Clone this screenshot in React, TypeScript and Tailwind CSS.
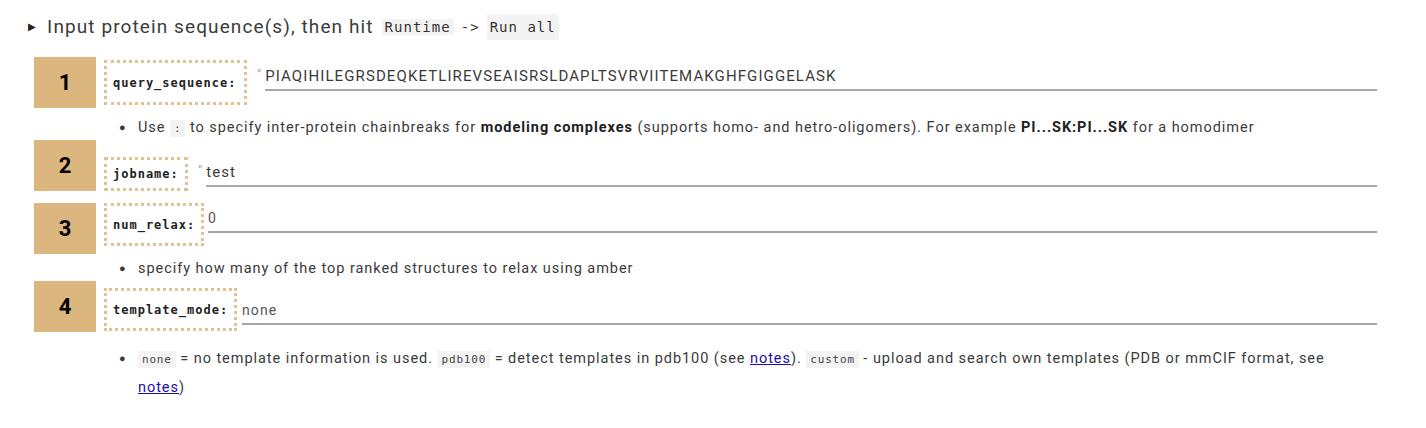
const ROWS = [
  {
    n: "1",
    label: "query_sequence:",
    value: "PIAQIHILEGRSDEQKETLIREVSEAISRSLDAPLTSVRVIITEMAKGHFGIGGELASK",
    quote: true,
    row: "mt-[17px]",
    dash: "h-[45px] w-[143px] mt-[3px]",
    field: "mt-[10px] ml-[10px]",
    text: "text-[15px] text-[#3a3a3a]",
  },
  {
    n: "2",
    label: "jobname:",
    value: "test",
    quote: true,
    row: "mt-[0px]",
    dash: "h-[34px] w-[84px] mt-[17px]",
    field: "mt-[23px] ml-[10px]",
    text: "text-[15px] text-[#3a3a3a]",
  },
  {
    n: "3",
    label: "num_relax:",
    value: "0",
    quote: false,
    row: "mt-[12px]",
    dash: "h-[43px] w-[100px] mt-[0px]",
    field: "mt-[6px] ml-[4px]",
    text: "text-[14px] text-[#555]",
  },
  {
    n: "4",
    label: "template_mode:",
    value: "none",
    quote: false,
    row: "mt-[1px]",
    dash: "h-[43px] w-[133px] mt-[7px]",
    field: "mt-[20px] ml-[5px]",
    text: "text-[14px] text-[#555]",
  },
];

function Code({ children, size = "small" }: { children: React.ReactNode; size?: "small" | "big" }) {
  return (
    <span
      className={
        size === "big"
          ? "bg-[#f3f3f3] px-[3px] font-['DejaVu_Sans_Mono',monospace] text-[14px] tracking-[1px] text-[#333]"
          : "bg-[#f3f3f3] px-[4px] py-[2px] font-['DejaVu_Sans_Mono',monospace] text-[11px] tracking-[0.8px] text-[#444]"
      }
    >
      {children}
    </span>
  );
}

function Bullet({ children, className = "" }: { children: React.ReactNode; className?: string }) {
  return (
    <div className={"flex pl-[119px] text-[14.5px] tracking-[0.95px] text-[#3a3a3a] " + className}>
      <span className="w-[19px] shrink-0 text-[11px]">●</span>
      <div className="pr-[30px]">{children}</div>
    </div>
  );
}

function FieldRow({ r }: { r: (typeof ROWS)[number] }) {
  return (
    <div className={"flex items-start pl-[34px] pr-[49px] " + r.row}>
      <div className="flex h-[51px] w-[62px] shrink-0 items-center justify-center bg-[#dbb67e] text-[22px] font-bold text-black">
        {r.n}
      </div>
      <div
        className={
          "ml-[8px] flex shrink-0 items-center border-[3px] border-dotted border-[#e2c290] pl-[6px] font-['DejaVu_Sans_Mono',monospace] text-[12px] font-bold tracking-[1px] text-[#222] " +
          r.dash
        }
      >
        {r.label}
      </div>
      <div className={"flex flex-1 items-end " + r.field}>
        {r.quote && <span className="mr-[4px] mt-[2px] self-start text-[13px] leading-[12px] text-[#999]">"</span>}
        <div className={"flex-1 border-b-2 border-[#a6a6a6] pb-[4px] leading-[18px] tracking-[1.1px] " + r.text}>
          {r.value}
        </div>
      </div>
    </div>
  );
}

export default function App() {
  return (
    <div className="h-[428px] w-[1426px] overflow-hidden bg-white font-['Roboto',sans-serif]">
      <div className="flex items-center pl-[28px] pt-[13px] text-[19px] leading-[26px] tracking-[1.1px] text-[#3c3c3c]">
        <span className="mr-[10px] text-[10px] text-[#222]">▶</span>
        <span>Input protein sequence(s), then hit</span>
        <span className="ml-[8px]">
          <Code size="big">Runtime</Code>
        </span>
        <span className="mx-[7px] font-['DejaVu_Sans_Mono',monospace] text-[14px] text-[#333]">-&gt;</span>
        <Code size="big">Run all</Code>
      </div>

      <FieldRow r={ROWS[0]} />
      <Bullet className="mt-[9px] leading-[22px]">
        Use <Code>:</Code> to specify inter-protein chainbreaks for <b className="font-bold text-[#222]">modeling complexes</b>{" "}
        (supports homo- and hetro-oligomers). For example <b className="font-bold text-[#222]">PI...SK:PI...SK</b> for a
        homodimer
      </Bullet>
      <FieldRow r={ROWS[1]} />
      <FieldRow r={ROWS[2]} />
      <Bullet className="mt-[4px] leading-[22px]">specify how many of the top ranked structures to relax using amber</Bullet>
      <FieldRow r={ROWS[3]} />
      <Bullet className="mt-[13px] leading-[28px]">
        <Code>none</Code> = no template information is used. <Code>pdb100</Code> = detect templates in pdb100 (see{" "}
        <a className="text-[#1a0dab] underline">notes</a>). <Code>custom</Code> - upload and search own templates (PDB or
        mmCIF format, see
        <br />
        <a className="text-[#1a0dab] underline">notes</a>)
      </Bullet>
    </div>
  );
}
